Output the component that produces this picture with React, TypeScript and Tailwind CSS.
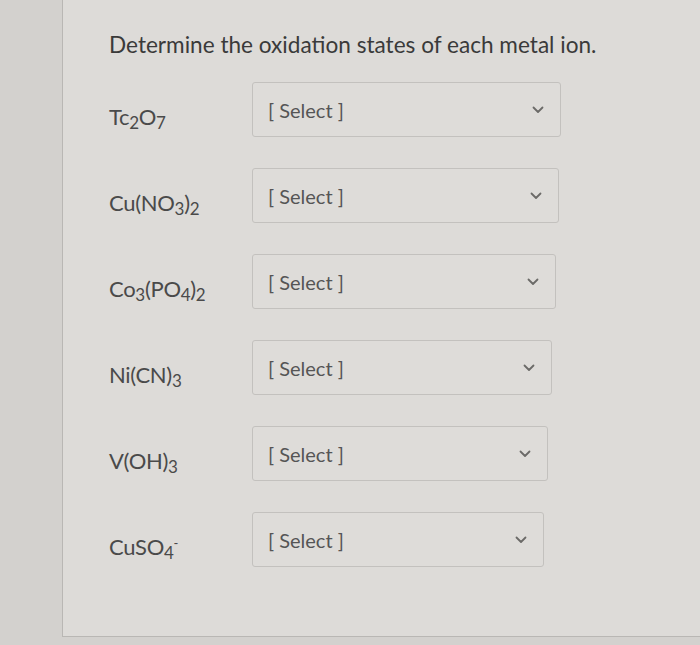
import type { ReactNode } from "react";

type Row = { label: ReactNode; width: string };

const rows: Row[] = [
  { label: <>Tc<sub>2</sub>O<sub>7</sub></>, width: "w-[309px]" },
  { label: <>Cu(NO<sub>3</sub>)<sub>2</sub></>, width: "w-[307px]" },
  { label: <>Co<sub>3</sub>(PO<sub>4</sub>)<sub>2</sub></>, width: "w-[304px]" },
  { label: <>Ni(CN)<sub>3</sub></>, width: "w-[300px]" },
  { label: <>V(OH)<sub>3</sub></>, width: "w-[296px]" },
  { label: <>CuSO<sub>4</sub><sup>-</sup></>, width: "w-[292px]" },
];

function Chevron() {
  return (
    <svg width="12" height="8" viewBox="0 0 12 8" fill="none">
      <path d="M1.5 1.5 L6 6 L10.5 1.5" stroke="#6b6a68" strokeWidth="1.8" strokeLinecap="round" strokeLinejoin="round" />
    </svg>
  );
}

export default function App() {
  return (
    <div className="h-[645px] w-[700px] overflow-hidden bg-[#d3d1ce] pl-[62px] font-['Lato',sans-serif]">
      <div className="h-[637px] border-b border-l border-[#b9b7b4] bg-[#dddbd8] pl-[46px] pt-[31px]">
        <h1 className="text-[22.6px] leading-[28px] text-[#3a3a3a]">
          Determine the oxidation states of each metal ion.
        </h1>

        <div className="mt-[23px] flex flex-col gap-[31px]">
          {rows.map((row, i) => (
            <div key={i} className="flex items-center">
              <div className="mt-[14px] w-[143px] text-[22px] leading-[24px] tracking-[-0.3px] text-[#4a4a4a] [&_sub]:text-[17px] [&_sup]:text-[13px]">
                {row.label}
              </div>
              <div
                className={`flex h-[55px] ${row.width} items-center justify-between rounded-[3px] border border-[#c3c1be] bg-[#dedcd9] pl-[15px] pr-[16px]`}
              >
                <span className="text-[20px] leading-[24px] text-[#555]">[ Select ]</span>
                <Chevron />
              </div>
            </div>
          ))}
        </div>
      </div>
    </div>
  );
}
